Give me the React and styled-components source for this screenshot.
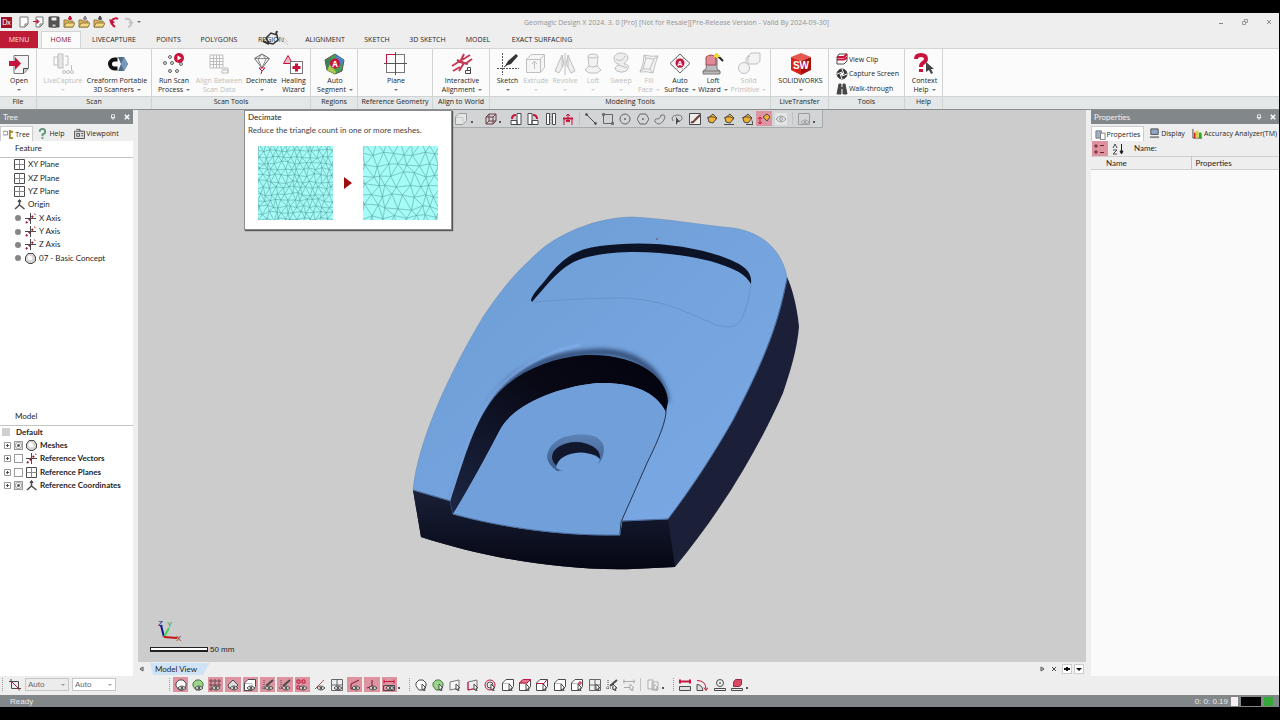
import React from "react";
import styled, { createGlobalStyle } from "styled-components";

const RED = "#c8143c";
const INK = "#4a4a4a";
const GREY = "#828789";
const COMPACT_FONT = `"Open Sans", "Noto Sans", sans-serif`;
const PLAIN_FONT = `"Liberation Sans", Arial, sans-serif`;

const GlobalStyle = createGlobalStyle`
  * {
    box-sizing: border-box;
  }

  body {
    margin: 0;
    background: #000;
    color: #1e1e1e;
    font-family: Lato, "Open Sans", sans-serif;
    font-size: 8px;
    line-height: 9px;
  }

  button,
  select,
  input {
    margin: 0;
    padding: 0;
    border: 0;
    background: none;
    color: inherit;
    font: inherit;
  }
`;

/* ---------- layout ---------- */

const Screen = styled.div`
  display: flex;
  flex-direction: column;
  height: 100vh;
  padding: 13px 1px 13px 0;
`;

const AppWindow = styled.div`
  position: relative;
  display: flex;
  flex: 1;
  flex-direction: column;
  min-height: 0;
  background: #eee;
`;

const TitleBar = styled.header`
  display: grid;
  grid-template-columns: 1fr auto 1fr;
  align-items: center;
  height: 18px;
`;

const QuickAccess = styled.div`
  display: flex;
  align-items: center;
  gap: 1px;
`;

const QuickButton = styled.button`
  display: flex;
  justify-content: center;
  width: 14px;
`;

const Title = styled.h1`
  margin: 0;
  padding-left: 74px;
  color: #949494;
  font-family: ${COMPACT_FONT};
  font-size: 7px;
  font-weight: 400;
`;

const WindowButtons = styled.div`
  display: flex;
  justify-content: flex-end;
  gap: 14px;
  padding-right: 4px;
`;

const WindowButton = styled.button`
  display: flex;
  width: 10px;
`;

const Tabs = styled.nav`
  display: flex;
  height: 17px;
`;

const RibbonTab = styled.button`
  width: ${(props) => props.$width}px;
  padding-bottom: 1px;
  white-space: nowrap;
  border: 1px solid transparent;
  border-bottom: 0;
  font-family: ${COMPACT_FONT};
  font-size: 7px;
  ${(props) =>
    props.$active &&
    "background: #fbfbfb; border-color: #d4d4d4; color: #7c1530;"}
`;

const MenuTab = styled(RibbonTab)`
  margin-right: 3px;
  background: #bd1b36;
  color: #fbe4e8;
`;

const Ribbon = styled.div`
  display: flex;
  height: 62px;
  border-top: 1px solid #d4d4d4;
  border-bottom: 1px solid #8a8e90;
  background: linear-gradient(#fbfbfb 47px, #cfd3d4 47px, #cfd3d4 48px, #e3e7e8 48px);
  font-family: ${COMPACT_FONT};
  font-size: 7px;
`;

const Group = styled.section`
  display: flex;
  flex-direction: column;
  flex: 0 0 ${(props) => props.$width}px;
  border-right: 1px solid #d0d3d4;
`;

const GroupBody = styled.div`
  display: flex;
  justify-content: center;
  height: 48px;
  padding: 3px 0 0 2px;
`;

const GroupName = styled.h2`
  margin: 0;
  font-size: 7px;
  font-weight: 400;
  text-align: center;
  white-space: nowrap;
`;

const BigButton = styled.button`
  display: flex;
  flex-direction: column;
  align-items: center;
  width: ${(props) => props.$width}px;
  white-space: nowrap;
  color: ${(props) => (props.disabled ? "#bdbdbd" : "inherit")};
`;

const LabelLine = styled.span`
  display: flex;
  align-items: center;
  justify-content: center;
  gap: 3px;
  height: 9px;
`;

const Caret = styled.i`
  border: 2px solid transparent;
  border-top-color: currentColor;
  border-bottom: 0;
  opacity: 0.6;
`;

const SmallButtons = styled.div`
  display: flex;
  flex-direction: column;
  justify-content: space-around;
  height: 44px;
`;

const SmallButton = styled.button`
  display: flex;
  align-items: center;
  gap: 1px;
  white-space: nowrap;
`;

const Workspace = styled.main`
  display: grid;
  grid-template-columns: 133px minmax(0, 1fr) 188px;
  flex: 1;
  min-height: 0;
`;

const Dock = styled.aside`
  display: flex;
  flex-direction: column;
  min-height: 0;
  overflow: hidden;
  background: #eee;
`;

const DockHeader = styled.div`
  display: flex;
  align-items: center;
  gap: 8px;
  height: 14px;
  padding: 0 3px;
  background: ${GREY};
  color: #f0f0f0;
`;

const DockTitle = styled.h2`
  flex: 1;
  margin: 0;
  font-size: 8px;
  font-weight: 400;
`;

const DockTabs = styled.div`
  display: flex;
  height: 17px;
  padding-top: 2px;
  font-family: ${COMPACT_FONT};
  font-size: 7px;
`;

const DockTab = styled.button`
  display: flex;
  flex: 0 0 ${(props) => props.$width}px;
  align-items: center;
  justify-content: center;
  gap: 1px;
  white-space: nowrap;
  ${(props) =>
    props.$active &&
    "background: #fff; border: 1px solid #ccc; border-bottom: 0;"}
`;

const Pane = styled.section`
  flex: 1;
  background: #fff;
`;

const PaneTitle = styled.h3`
  height: 17px;
  margin: 0;
  padding: 3px 0 0 15px;
  border-bottom: 1px solid #c4c4c4;
  font-size: 8px;
  font-weight: 400;
`;

const TreeList = styled.ul`
  display: grid;
  grid-auto-rows: 1fr;
  height: ${(props) => props.$height}px;
  margin: 0;
  padding: 0;
  list-style: none;
`;

const TreeItem = styled.li`
  display: flex;
  align-items: center;
  gap: 3px;
  padding-left: ${(props) => props.$indent}px;
  font-weight: ${(props) => (props.$bold ? 700 : 400)};
`;

const Bullet = styled.i`
  width: 6px;
  height: 6px;
  margin-right: 1px;
  border-radius: 50%;
  background: #858585;
`;

const Expander = styled.button`
  display: flex;
`;

const Check = styled.input`
  appearance: none;
  width: 9px;
  height: 9px;
  border: 1px solid #9a9a9a;
  background: #fff;

  &:checked {
    background: radial-gradient(#666 1px, #fff 2px, #aaa 3px, #e4e4e4 4px);
  }
`;

const CheckLabel = styled.label`
  display: flex;
  align-items: center;
  gap: 3px;
`;

const Swatch = styled.i`
  width: 8px;
  height: 8px;
  margin-right: 3px;
  background: #cfcfcf;
`;

const Center = styled.div`
  display: flex;
  flex-direction: column;
  min-width: 0;
  min-height: 0;
  padding: 0 5px;
`;

const Viewport = styled.div`
  position: relative;
  flex: 1;
  min-height: 0;
  background: #ccc;
`;

const Scene = styled.svg`
  display: block;
  width: 100%;
  height: 100%;
`;

const FloatingBar = styled.div`
  position: absolute;
  top: 0;
  left: 312px;
  display: flex;
  align-items: center;
  height: 18px;
  padding-right: 3px;
  border: 1px solid #a6abae;
  border-top: 0;
  background: #d2d4d5;
`;

const IconRun = styled.div`
  display: flex;
  flex: 0 0 ${(props) => props.$width}px;
  height: 15px;
`;

const ToolButton = styled.button`
  display: flex;
  flex: 1;
  align-items: center;
  justify-content: center;
  margin: 0 1px;
  background: ${(props) => (props.$on ? "#dd94a0" : "none")};
  opacity: ${(props) => (props.disabled ? 0.4 : 1)};
`;

const Dot = styled.i`
  width: 2px;
  height: 2px;
  margin: 6px ${(props) => props.$gap || 4}px 0 0;
  background: #555;
`;

const Divider = styled.i`
  width: 1px;
  height: 13px;
  margin: 0 2px;
  background: #c0c3c4;
`;

const Tooltip = styled.div`
  position: absolute;
  top: 0;
  left: 106px;
  width: 208px;
  height: 120px;
  padding: 2px 3px;
  border: 1px solid #8c8c8c;
  background: #fff;
  box-shadow: 1px 1px 1px #555;
  color: #444;
`;

const TooltipTitle = styled.strong`
  display: block;
  margin-bottom: 4px;
  font-weight: 400;
  color: #222;
`;

const TooltipArt = styled.div`
  display: flex;
  align-items: center;
  justify-content: space-between;
  padding: 11px 10px 0 10px;
`;

const Triad = styled.div`
  position: absolute;
  bottom: 8px;
  left: 12px;
`;

const ScaleBar = styled.div`
  display: flex;
  align-items: center;
  gap: 2px;
  font-family: ${PLAIN_FONT};
`;

const ScaleRule = styled.i`
  width: 58px;
  height: 5px;
  border: 1px solid #222;
  border-bottom-width: 2px;
  background: #fff;
`;

const ViewTabs = styled.div`
  display: flex;
  align-items: center;
  height: 14px;
  gap: 5px;
  padding-right: 5px;
`;

const ViewTab = styled.button`
  flex: 0 0 60px;
  height: 12px;
  padding-left: 5px;
  background: #cfe3f7;
  text-align: left;
  clip-path: polygon(0 0, 100% 0, 88% 100%, 5% 100%);
`;

const Spacer = styled.div`
  flex: 1;
`;

const ViewNav = styled.button`
  display: flex;
  align-items: center;
  justify-content: center;
  width: ${(props) => (props.$boxed ? 10 : 7)}px;
  height: 10px;
  ${(props) =>
    props.$boxed &&
    "background: #fff; border: 1px solid #ccc; margin-right: -3px;"}
`;

const PropTools = styled.div`
  display: flex;
  align-items: center;
  height: 15px;
`;

const PropName = styled.span`
  padding-left: 7px;
`;

const PropTable = styled.table`
  width: 100%;
  border-collapse: collapse;
  border-top: 1px solid #d0d0d0;

  th {
    height: 13px;
    padding: 0 0 0 4px;
    border-bottom: 1px solid #d0d0d0;
    font-size: 8px;
    font-weight: 400;
    line-height: 9px;
    text-align: left;
  }

  th + th {
    width: 88px;
    border-left: 1px solid #c4c4c4;
  }

  th:first-child {
    padding-left: 15px;
  }
`;

const Blank = styled.div`
  flex: 1;
  background: #fafafa;
`;

const BottomBar = styled.div`
  display: flex;
  align-items: center;
  height: 19px;
  padding-bottom: 2px;
`;

const Filters = styled.div`
  display: flex;
  align-items: center;
  flex: 0 0 167px;
`;

const Grip = styled.i`
  width: 1px;
  height: 13px;
  margin: 0 2px;
  border-left: 1px dotted #999;
`;

const SelectBox = styled.span`
  display: flex;
  align-items: center;
  width: 44px;
  height: 13px;
  margin-right: 3px;
  padding-right: 3px;
  border: 1px solid #c6c6c6;
  background: ${(props) => (props.$plain ? "#fff" : "#ececec")};
  color: #666;
  font-family: ${PLAIN_FONT};
`;

const Select = styled.select`
  flex: 1;
  padding-left: 2px;
  appearance: none;
`;

const StatusBar = styled.footer`
  display: flex;
  align-items: center;
  gap: 3px;
  height: 12px;
  padding: 0 6px 0 10px;
  background: ${GREY};
  color: #e8ecee;
  font-family: ${PLAIN_FONT};
`;

const Lamp = styled.i`
  width: ${(props) => props.$width}px;
  height: 9px;
  background: ${(props) => props.$color};
`;

const Pointer = styled.svg`
  position: absolute;
  top: 16px;
  left: 261px;
`;

/* ---------- drawings ---------- */

const Svg = ({ size = 12, box = 12, children }) => (
  <svg
    width={size}
    height={size}
    viewBox={`0 0 ${box} ${box}`}
    fill="none"
    stroke={INK}
    aria-hidden="true"
  >
    {children}
  </svg>
);

const ribbonArt = {
  open: (
    <>
      <path d="M7 3.500h14.500v13L17 21.500H7z" fill="#f4f4f4" stroke="#777" />
      <path d="M21 16.500h-4.500v5" fill="#ccc" />
      <path d="M2 9h6V5l6 6.500L8 18v-4H2z" fill={RED} stroke="none" />
    </>
  ),
  capture: (
    <g stroke="#c0c0c0">
      <rect x="3" y="5" width="4" height="8" />
      <rect x="7" y="2" width="5" height="14" fill="#e4e4e4" />
      <path d="M14 4h3v9h-3M20.500 13v5" />
      <circle cx="13" cy="20" r="1.500" />
      <circle cx="17" cy="20" r="1.500" />
      <circle cx="21" cy="20" r="1.500" />
    </g>
  ),
  creaform: (
    <>
      <path d="M13 5h6l4 7-4 7h-6l3-7z" fill="#4c6b8e" stroke="none" />
      <path d="M19 5l4 7-4 7-3-7z" fill="#7a98bb" stroke="none" />
      <path d="M12.500 7.500h-3a4.500 4.500 0 0 0 0 9h3" stroke="#111" strokeWidth="4" />
    </>
  ),
  run: (
    <>
      <g stroke="#666" fill="#ddd">
        <circle cx="8" cy="5" r="1.500" />
        <circle cx="3" cy="11" r="1.500" />
        <circle cx="10" cy="11" r="1.500" />
        <circle cx="19" cy="12" r="1.500" />
        <circle cx="8" cy="19" r="1.500" />
        <circle cx="15" cy="19" r="1.500" />
      </g>
      <circle cx="17" cy="6" r="5" fill={RED} stroke="none" />
      <path d="M15.500 3.500l4 2.500-4 2.500z" fill="#fff" stroke="none" />
    </>
  ),
  align: (
    <g stroke="#bdbdbd">
      <path d="M3 3h13v13H3zM6.500 3v13M9.500 3v13M12.500 3v13M3 6.500h13M3 9.500h13M3 12.500h13" />
      <path d="M15 18h6v3h-6zM17 18v-2h4v5" />
    </g>
  ),
  decimate: (
    <>
      <path d="M12 2l7.500 4.500L12 16 4.500 6.500z" fill="#fafafa" stroke="#666" />
      <path d="M4.500 6.500h15M8 7l4-5 4 5-4 9z" stroke="#888" />
      <path d="M9 16h6l-3 3zM12 19l-1 3" stroke={RED} />
    </>
  ),
  heal: (
    <>
      <path d="M6 3.500l4.500 8h-9z" stroke={RED} fill="#f3b8c4" />
      <rect x="8.500" y="9.500" width="12" height="12" fill="#fff" stroke="#777" />
      <path d="M14.500 11.500v8M10.500 15.500h8" stroke={RED} strokeWidth="3" />
    </>
  ),
  segment: (
    <>
      <path d="M12 2l9 6-2 11-7 3-8-4-2-10z" fill="#4d9b50" stroke="#555" />
      <path d="M12 2l9 6-3 6-6-8z" fill="#4b83c4" stroke="none" />
      <path d="M4 18l3-7 6 9-1 2z" fill="#a7c94a" stroke="none" />
      <path d="M2 8l6-2-1 6-3 6z" fill="#3f7f55" stroke="none" />
      <circle cx="12" cy="11.500" r="5" fill={RED} stroke="none" />
      <text x="12" y="14.500" textAnchor="middle" fontSize="8" fontWeight="700" fill="#fff" stroke="none">
        A
      </text>
    </>
  ),
  plane: (
    <>
      <rect x="2.500" y="2.500" width="18" height="18" stroke="#777" />
      <path d="M11.500 0v23M0 11.500h23" stroke="#555" />
      <path d="M2.500 11.500v-9h9" stroke={RED} />
    </>
  ),
  interactive: (
    <g stroke="#c43a54" strokeWidth="2">
      <path d="M20 3l-8 5M22 7l-7 5M14 2l-4 8 8 2" />
      <path d="M2 14l8-5M3 19l7-4M7 8l7 3-5 8" />
      <path d="M15.500 18.500h5v3h-5zM17.500 18v-2.500h3v6" stroke={INK} strokeWidth="1" />
    </g>
  ),
  sketch: (
    <>
      <path d="M6.500 1v22M1 16.500h22" stroke="#555" strokeDasharray="2 1" />
      <path d="M9 14l3-5 8-7 2 2-7 8z" fill="#333" stroke="none" />
      <path d="M8 15l3-2" />
    </>
  ),
  extrude: (
    <g stroke="#c0c0c0">
      <path d="M2.500 7l5-4.500h13v13l-4 5h-14z" fill="#f5f5f5" />
      <path d="M10.500 17v-7M8 12l2.500-3 2.500 3M20.500 3l-4 4v13M3 7.500h13" />
    </g>
  ),
  revolve: (
    <g stroke="#c0c0c0">
      <path d="M9 3l-7 16 4 2 5-9zM15 3l7 16-4 2-5-9zM12 1v22" fill="#eee" />
      <path d="M9 3v12M15 3v12" />
    </g>
  ),
  loft: (
    <g stroke="#c0c0c0" fill="#f2f2f2">
      <path d="M7 4l1 10-4 4 4 3h8l4-3-4-4 1-10z" />
      <ellipse cx="12" cy="4" rx="5" ry="2" />
      <path d="M8 14q4 2 8 0" />
    </g>
  ),
  sweep: (
    <g stroke="#bcbcbc" fill="#eee">
      <path d="M5 6a7 5 0 0 1 14 0c0 3-4 4-4 6 4 0 5 2 4 5a7 5 0 0 1-13 0c0-3 3-3 4-5-3 0-5-3-5-6z" />
      <path d="M7 7c3 3 8 1 9-3M9 13c3 0 6 3 9 2" />
    </g>
  ),
  fill: (
    <g stroke="#c0c0c0">
      <path d="M7 3q7 2 14 1-3 7-5 17-6-2-13-1 4-8 4-17z" fill="#f4f4f4" />
      <path d="M9 6l8 1-4 10-7 0zM7 3l2 3M21 4l-4 3M16 21l-3-4M3 20l3-3" />
    </g>
  ),
  surface: (
    <>
      <path d="M12 2l10 9.500L12 21 2 11.500z" fill="#f4f4f4" stroke="#666" />
      <path d="M8 6q3 6 8 0M8 18q3-6 8 0" stroke="#aaa" />
      <circle cx="12" cy="11" r="4.500" fill={RED} stroke="none" />
      <text x="12" y="13.500" textAnchor="middle" fontSize="7" fontWeight="700" fill="#fff" stroke="none">
        A
      </text>
    </>
  ),
  loftWizard: (
    <>
      <path d="M6 5L5 17l-3 2v3h17v-3l-3-2V5z" fill="#bbb" stroke="#777" />
      <path d="M5 5q5-4 10 0v8H5z" fill="#e28a98" stroke="#a0495a" />
      <path d="M2 19h17" stroke="#777" />
      <path d="M15 2l7 7" stroke="#222" strokeWidth="2" />
      <path d="M13 4h6M16 1v5" stroke="#f1de2d" strokeWidth="2" />
    </>
  ),
  solid: (
    <g stroke="#c0c0c0" fill="#f3f3f3">
      <path d="M11 4l3-3h9v8l-3 3h-9z" />
      <circle cx="7" cy="16" r="5.500" />
      <path d="M9 11V7q1-3 4-3" fill="none" />
    </g>
  ),
  solidworks: (
    <>
      <path d="M12 1l10 4-10 4L2 5z" fill="#e4574e" stroke="none" />
      <path d="M2 5l10 4v14L2 18z" fill="#d9221c" stroke="none" />
      <path d="M22 5L12 9v14l10-5z" fill="#a80f12" stroke="none" />
      <text
        x="12"
        y="17"
        textAnchor="middle"
        fontFamily="Liberation Sans, sans-serif"
        fontSize="10"
        fontWeight="700"
        fill="#fff"
        stroke="none"
      >
        SW
      </text>
    </>
  ),
  help: (
    <>
      <path
        d="M3 7q0-4 5-4t5 4q0 2-3 4-2 1-2 4"
        stroke={RED}
        strokeWidth="4"
      />
      <rect x="6" y="17" width="4" height="3" fill={RED} stroke="none" />
      <path d="M13 10l8 7h-3l2 4-2 1-2-4-3 2z" fill="#444" stroke="none" />
    </>
  ),
};

const smallArt = {
  clip: (
    <>
      <path d="M3 1h8v7l-3 3H1V4z" fill="#fff" />
      <path d="M1 4h7l3-3M1 6.500h7l3-2" stroke={RED} strokeWidth="2" />
    </>
  ),
  shutter: (
    <>
      <circle cx="6" cy="6" r="5" fill="#333" />
      <path d="M6 1l2 5M11 6L6 8M6 11L4 6M1 6l5-2" stroke="#fff" />
      <circle cx="6" cy="6" r="1.500" fill="#fff" stroke="none" />
    </>
  ),
  walk: (
    <>
      <path d="M3 1h2v10H1zM7 1h2l2 10H7z" fill="#444" />
      <path d="M4 5h4" strokeWidth="2" />
    </>
  ),
};

function Folder({ mark }) {
  return (
    <>
      <path d="M1 11V4h3l1 1h5v6z" fill="#e2b84e" stroke="#8f7a45" />
      <path d="M1 11l2-4h9l-2 4z" fill="#f6d983" stroke="#8f7a45" />
      <path d="M7 0v4M5 2.500h4" stroke={mark} strokeWidth="2" />
    </>
  );
}

const quickArt = {
  New: <path d="M2 1h8v7l-3 3H2zM10 8H7v3" fill="#fff" stroke="#777" />,
  Import: (
    <>
      <path d="M3 1h7v7l-3 3H3zM10 8H7v3" fill="#fff" stroke="#777" />
      <path d="M0 5.500h5M4 3.500l2 2-2 2z" stroke={RED} fill={RED} />
    </>
  ),
  Save: (
    <>
      <path d="M1 1h10v10H1z" fill="#555" />
      <path d="M3 1h6v4H3z" fill="#eee" />
      <path d="M4 8h4v3H4z" fill="#ccc" />
    </>
  ),
  "Open file": <Folder mark={RED} />,
  "Open recent": <Folder mark="#8a8a8a" />,
  "Open folder": <Folder mark="#555" />,
  Undo: (
    <>
      <path d="M3 5q4-4 7-2" stroke={RED} strokeWidth="2" />
      <path d="M4 5q-1 3 3 6" stroke={RED} strokeWidth="2" />
      <path d="M1 3l6 3-4 3z" fill={RED} stroke="none" />
    </>
  ),
  Redo: (
    <>
      <path d="M2 3q5-1 6 3t-3 5" stroke="#c4c4c4" strokeWidth="2" />
      <path d="M5 6h6L8 9z" fill="#c4c4c4" stroke="none" />
    </>
  ),
};

const PlaneIcon = () => (
  <Svg size={11} box={11}>
    <path d="M.5.500h10v10H.5z" />
    <path d="M5.500.5v10M.5 5.500h10" stroke="#888" />
  </Svg>
);

const AxisIcon = () => (
  <Svg size={11} box={11}>
    <path d="M5.500 0v11M0 5.500h11" />
    <path d="M1 10L10 1" stroke="#8c2438" strokeWidth="2" strokeDasharray="2 2" />
  </Svg>
);

const OriginIcon = () => (
  <Svg size={11} box={11}>
    <path d="M5.500 1v5L1 10M5.500 6l5 4" strokeWidth="1.500" />
    <path d="M4 2.500L5.500.5 7 2.500z" fill={INK} />
  </Svg>
);

const MeshIcon = () => (
  <Svg size={11} box={11}>
    <path d="M3 .5h5L10.500 4v4L7 10.500H4L.5 8V4z" fill="#d4d4d4" />
    <path d="M4 2l3 1 1 3-2 2-3-1-1-3z" fill="#fff" stroke="#ddd" />
  </Svg>
);

const Eye = () => (
  <>
    <path d="M3 9q3.500-4 8 0-4 4-8 0z" fill="#fff" />
    <circle cx="7" cy="9" r="1" fill={INK} />
  </>
);

const Arrow = () => (
  <path d="M7 5l4 4H9l1 3-1 0-1-2-1 1z" fill="#fff" />
);

const Ball = <path d="M4 1h4l3 3v3l-3 4H4L1 7V4z" fill="#fff" />;
const GreenBall = (
  <path d="M4 1h4l3 3v3l-3 4H4L1 7V4z" fill="#9bd48a" stroke="#447a44" />
);
const Cube = (
  <>
    <path d="M.5 4L4 .5h7.500v7l-3.500 4H.5z" fill="#fff" />
    <path d="M1 4.500h7V11" stroke="#bbb" />
  </>
);
const Pen = (
  <>
    <path d="M2 1v10M0 9h11" strokeDasharray="1 1" />
    <path d="M4 7l7-6" strokeWidth="2" />
  </>
);
const Bucket = (
  <>
    <path d="M2 5l5-4 4 4-4 5-4-1z" fill="#f0b030" />
    <path d="M1 5q5-3 10 1" />
  </>
);

const viewTools = [
  {
    name: "Section",
    art: (
      <>
        <path d="M1 7.500h6v4H1zM7 7.500V.5h4v11H7z" fill="#fff" />
        <path d="M2 6q0-4 4-4" stroke={RED} strokeWidth="2" />
      </>
    ),
  },
  {
    name: "Rotate section",
    art: (
      <>
        <path d="M5 7.500h6v4H5zM1 .5h4v11H1z" fill="#fff" />
        <path d="M6 2q4 0 4 4" stroke={RED} strokeWidth="2" />
      </>
    ),
  },
  {
    name: "Flip",
    art: (
      <>
        <path d="M1.500.5h3v11h-3zM7.500.5h3v11h-3z" fill="#fff" />
        <path d="M6 0v12" stroke="#999" strokeDasharray="2 1" />
      </>
    ),
  },
  {
    name: "Lift",
    art: (
      <>
        <path d="M1 5.500h10M4 8h4" stroke={RED} strokeWidth="2" />
        <path d="M2 6v6M10 6v6M6 8V1M4 3l2-2 2 2" stroke={RED} />
      </>
    ),
  },
];

const selectTools = [
  {
    name: "Line",
    art: (
      <>
        <path d="M1 1l10 10" />
        <circle cx="1.500" cy="1.500" r="1" />
        <circle cx="10.500" cy="10.500" r="1" />
      </>
    ),
  },
  {
    name: "Rectangle",
    art: <path d="M1.500 1.500h9v9h-9zM.5.500h2v2h-2zM9.500 9.500h2v2h-2z" stroke="#666" />,
  },
  {
    name: "Circle",
    art: (
      <>
        <circle cx="6" cy="6" r="5" stroke="#666" />
        <circle cx="6" cy="6" r=".5" />
      </>
    ),
  },
  {
    name: "Polygon",
    art: (
      <>
        <path d="M3 1h6l3 5-3 5H3L0 6z" stroke="#666" />
        <circle cx="6" cy="6" r=".5" />
      </>
    ),
  },
  {
    name: "Freeform",
    art: <path d="M1 9q-1-4 3-3 3-1 3-4 4-1 4 2-2 7-7 7z" stroke="#777" />,
  },
  {
    name: "Lasso",
    art: (
      <>
        <path d="M2 8q-3-5 4-6 6 0 5 4-1 2-3 2" stroke="#777" />
        <path d="M5 4l4 5H7l-2 3z" fill={INK} stroke="none" />
      </>
    ),
  },
  {
    name: "Brush",
    art: (
      <>
        <path d="M.5.500h11v11H.5z" fill="#eee" />
        <path d="M11 2L6 7q-2 3-4 2" strokeWidth="2" stroke="#6b3f3a" />
      </>
    ),
  },
  { name: "Fill", art: Bucket },
  {
    name: "Fill region",
    art: (
      <>
        {Bucket}
        <path d="M1 11.500h10" />
      </>
    ),
  },
  {
    name: "Fill smart",
    art: (
      <>
        {Bucket}
        <path d="M5 11.500h7l-1-4" />
      </>
    ),
  },
  {
    name: "Extend",
    on: true,
    art: (
      <>
        <path d="M5 4l4-3 3 3-3 4z" fill="#f0b030" />
        <path d="M2 4v7M0 6l2-2 2 2M0 9l2 2 2-2" stroke={RED} />
      </>
    ),
  },
  {
    name: "Visible only",
    disabled: true,
    art: (
      <>
        <rect width="12" height="12" fill="#fff" stroke="none" />
        <path d="M1 6q5-6 10 0-5 6-10 0z" />
        <circle cx="6" cy="6" r="1.500" />
      </>
    ),
  },
];

const showTools = [
  { name: "Meshes", on: true, art: Ball },
  { name: "Regions", art: GreenBall },
  {
    name: "Point clouds",
    on: true,
    art: (
      <path
        d="M1 1h2v2H1zM5 1h2v2H5zM9 1h2v2H9zM1 5h2v2H1zM5 5h2v2H5zM9 5h2v2H9zM1 9h2v2H1z"
        stroke="#6b4a50"
      />
    ),
  },
  { name: "Surfaces", on: true, art: <path d="M1 6l5-5 5 5-3 3H2z" fill="#ddd" /> },
  { name: "Solids", on: true, art: Cube },
  { name: "Sketches", on: true, art: Pen },
  { name: "3D sketches", on: true, art: Pen },
  {
    name: "Points",
    on: true,
    art: <path d="M1 1h3v3H1zM6 1h3v3H6zM1 7h3v3H1z" stroke={RED} />,
  },
  { name: "Vectors", art: <path d="M1 10L10 1" stroke="#a55" /> },
  {
    name: "Planes",
    art: <path d="M.5.500h11v11H.5zM6 1v10M1 6h10" stroke="#666" />,
  },
  { name: "Polylines", on: true, art: <path d="M10 1L2 5v5h3" stroke="#7c1530" /> },
  { name: "Coordinates", on: true, art: <path d="M6 1v6L1 9M6 7l5 2" stroke="#7c1530" /> },
  {
    name: "Dimensions",
    on: true,
    art: (
      <>
        <path d="M1 2.500h10M1 .5v4M11 .5v4" stroke={RED} />
        <path d="M.5 6.500h11v5H.5z" />
      </>
    ),
  },
].map((tool) => ({
  ...tool,
  art: (
    <>
      {tool.art}
      <Eye />
    </>
  ),
}));

const filterTools = [
  { name: "Select mesh", art: Ball },
  { name: "Select region", art: GreenBall },
  { name: "Select face", art: <path d="M1 3l9-2v8l-9 2z" fill="#f6f6f6" stroke="#777" /> },
  {
    name: "Select boundary",
    art: (
      <>
        <path d="M1 3l9-2v8l-9 2z" stroke="#777" />
        <path d="M1 3v8l5-1" stroke={RED} />
      </>
    ),
  },
  {
    name: "Select loop",
    art: (
      <>
        <circle cx="6" cy="6" r="5" stroke={RED} />
        <circle cx="6" cy="6" r="3" />
      </>
    ),
  },
  { name: "Select body", art: Cube },
  {
    name: "Select top",
    art: (
      <>
        {Cube}
        <path d="M.5 4L4 .5h7.500L8 4z" fill="#e5758a" stroke={RED} />
      </>
    ),
  },
  {
    name: "Select edge",
    art: (
      <>
        {Cube}
        <path d="M.5 4.500H8l3-4" stroke={RED} />
      </>
    ),
  },
  { name: "Select solid", art: Cube },
  {
    name: "Select vertex",
    art: (
      <>
        {Cube}
        <path d="M8 3h2v2H8z" stroke={RED} />
      </>
    ),
  },
  {
    name: "Select plane",
    art: <path d="M.5.500h11v11H.5zM6 1v10M1 6h10" stroke="#666" />,
  },
  { name: "Select sketch", art: Pen },
  {
    name: "Select dimension",
    disabled: true,
    art: <path d="M0 2.500h12M1 .5v4M11 .5v4M1 8.500h10" />,
  },
].map((tool) => ({
  ...tool,
  art: (
    <>
      {tool.art}
      <Arrow />
    </>
  ),
}));

const measureTools = [
  {
    name: "Distance",
    art: (
      <>
        <path d="M1 2.500h10M1 .5v4M11 .5v4" stroke={RED} strokeWidth="2" />
        <path d="M.5 7.500h11v4H.5z" fill="#ddd" />
      </>
    ),
  },
  {
    name: "Angle",
    art: (
      <>
        <path d="M1 11.500v-6q5 0 6 6z" fill="#ddd" />
        <path d="M1 1.500q9 0 9 9M8 8.500l2 3 2-3" stroke={RED} />
      </>
    ),
  },
  {
    name: "Radius",
    art: (
      <>
        <circle cx="6" cy="4" r="3.500" />
        <circle cx="6" cy="4" r=".5" />
        <path d="M.5 9.500h11v2H.5z" />
      </>
    ),
  },
  {
    name: "Area",
    art: (
      <>
        <path d="M2.500 3l2-2.500h6v5l-2 2h-6z" fill="#d84a64" stroke="#a02840" />
        <path d="M.5 9.500h11v2H.5z" />
      </>
    ),
  },
];

// jittered grid of points joined into triangles
const Mesh = ({ cells }) => {
  const step = 75 / cells;
  const points = [];
  for (let row = 0; row <= cells + 1; row++) {
    points.push([]);
    for (let col = 0; col <= cells + 2; col++) {
      const a = Math.sin(row * 12.9 + col * 78.2) * 43758.5;
      const b = Math.sin(row * 39.3 + col * 11.1) * 24634.6;
      points[row].push([
        (col - 0.7 + (row % 2) / 2 + (a - Math.floor(a) - 0.5) * 0.6) * step,
        (row - 0.3 + (b - Math.floor(b) - 0.5) * 0.6) * step,
      ]);
    }
  }
  let d = "";
  for (let row = 0; row <= cells; row++) {
    for (let col = 0; col <= cells + 1; col++) {
      const here = points[row][col];
      d += `M${here}L${points[row][col + 1]}`;
      d += `M${here}L${points[row + 1][col]}`;
      d +=
        row % 2
          ? `M${here}L${points[row + 1][col + 1]}`
          : `M${points[row][col + 1]}L${points[row + 1][col]}`;
    }
  }
  return (
    <svg width="75" height="74" viewBox="0 0 75 74" aria-hidden="true">
      <rect width="75" height="74" fill="#a4fbf7" />
      <path d={d} fill="none" stroke="#4f9592" strokeWidth=".5" />
    </svg>
  );
};

const Part = () => (
  <Scene
    viewBox="138 110 948 552"
    preserveAspectRatio="xMidYMid meet"
    role="img"
    aria-label="Scanned part"
  >
    <defs>
      <linearGradient id="top" x1="0" y1="0" x2="1" y2="1">
        <stop offset="0" stopColor="#6d9dd4" />
        <stop offset=".5" stopColor="#74a3dd" />
        <stop offset="1" stopColor="#7aa9e6" />
      </linearGradient>
      <linearGradient id="front" x1="0" y1="0" x2="0" y2="1">
        <stop offset="0" stopColor="#1a2038" />
        <stop offset="1" stopColor="#060714" />
      </linearGradient>
      <linearGradient id="wall" x1="0" y1="1" x2="1" y2="0">
        <stop offset="0" stopColor="#1c2644" />
        <stop offset=".6" stopColor="#090916" />
        <stop offset="1" stopColor="#03030e" />
      </linearGradient>
      <linearGradient id="hole" x1="0" y1="0" x2="0" y2="1">
        <stop offset="0" stopColor="#5c83b8" />
        <stop offset="1" stopColor="#3d5b88" />
      </linearGradient>
      <filter id="soft">
        <feGaussianBlur stdDeviation="2" />
      </filter>
      <filter id="slight">
        <feGaussianBlur stdDeviation=".8" />
      </filter>
      <clipPath id="face">
        <path d="M413 490C418 440 450 372 483 317C505 284 520 268 543 248C565 231 600 217 633 217C670 219 700 225 733 228C765 233 782 252 787 277C778 325 765 358 733 420C712 457 690 490 668 519L413 540z" />
      </clipPath>
    </defs>
    <path
      d="M413 490L421 537C480 556 555 571 633 569L675 567C720 513 758 450 783 393C790 372 797 350 799 327C797 305 791 285 787 277L600 300z"
      fill="#1b2038"
    />
    <path d="M413 490L421 537C480 556 555 571 633 569L675 567L668 519z" fill="url(#front)" />
    <path
      d="M413 490C418 440 450 372 483 317C505 284 520 268 543 248C565 231 600 217 633 217C670 219 700 225 733 228C765 233 782 252 787 277C778 325 765 358 733 420C712 457 690 490 668 519L622 521L620 535C560 536 500 527 453 514L450 501z"
      fill="url(#top)"
      stroke="#6088b8"
      strokeWidth=".5"
    />
    <g clipPath="url(#face)">
      <path
        d="M455 500C470 450 484 405 510 381C535 360 570 353 600 352C635 352 662 371 666 402"
        fill="none"
        stroke="#36517d"
        strokeWidth="7"
        filter="url(#soft)"
      />
      <path
        d="M451 499C463 456 474 417 497 390C517 368 547 351 580 345"
        fill="none"
        stroke="#86b2ee"
        strokeWidth="2"
        filter="url(#slight)"
      />
    </g>
    <path
      d="M450 502C463 462 473 427 490 403C509 376 545 358 585 355C640 353 668 379 668 402L666 412C655 391 632 382 597 383C550 388 511 408 500 430C490 449 470 487 453 514z"
      fill="url(#wall)"
    />
    <path
      d="M453 514C470 487 490 449 500 430C511 408 550 388 597 383C632 382 655 391 666 412Q666 425 647 463Q633 495 622 521L620 535C560 536 500 527 453 514z"
      fill="#719fda"
    />
    <path d="M666 411Q666 425 647 463Q633 495 621 522L620 534" fill="none" stroke="#243451" />
    <path d="M453 514C500 527 560 536 620 535" fill="none" stroke="#4b6c9b" />
    <path
      d="M413 490L451 501M622 521L668 519M787 279C778 325 765 358 733 420C712 457 690 490 668 519"
      fill="none"
      stroke="#4b6c9b"
    />
    <path
      d="M531 300C533 293 540 287 547 278C562 259 575 249 600 246C650 239 704 247 735 262C748 268 752 275 751 284C745 273 733 268 710 261C660 249 613 250 584 258C563 264 552 279 532 302z"
      fill="#0d1327"
    />
    <path
      d="M533 302Q575 298 620 298C665 299 690 314 716 325C738 331 741 320 743 316Q750 300 751 284"
      fill="none"
      stroke="#6894cc"
    />
    <path
      d="M557 471Q547 464 547 456Q549 443 564 437Q580 432 594 436Q607 442 603 455Q602 462 594 467z"
      fill="url(#hole)"
    />
    <ellipse cx="576" cy="457" rx="24" ry="15" fill="#11172d" />
    <path d="M556 468C557 458 568 453 580 452.500C592 453 600 457 600 460Q598 468 584 472Q566 474 556 468z" fill="#719fda" />
    <circle cx="657" cy="239" r=".8" fill="#8a2c4a" />
  </Scene>
);

/* ---------- pieces ---------- */

const Big = ({ icon, width, lines, menu, disabled }) => (
  <BigButton $width={width} disabled={disabled}>
    <Svg size={24} box={24}>
      {ribbonArt[icon]}
    </Svg>
    <LabelLine>{lines[0]}</LabelLine>
    <LabelLine>
      {lines[1]}
      {menu && <Caret />}
    </LabelLine>
  </BigButton>
);

const RibbonGroup = ({ name, width, children }) => (
  <Group $width={width}>
    <GroupBody>{children}</GroupBody>
    <GroupName>{name}</GroupName>
  </Group>
);

const Tools = ({ items, width }) => (
  <IconRun $width={width}>
    {items.map((item) => (
      <ToolButton
        key={item.name}
        aria-label={item.name}
        $on={item.on}
        disabled={item.disabled}
      >
        <Svg>{item.art}</Svg>
      </ToolButton>
    ))}
  </IconRun>
);

const DockTop = ({ title }) => (
  <DockHeader>
    <DockTitle>{title}</DockTitle>
    <Svg size={6} box={8}>
      <path d="M2 1h4v4H2zM1 5h6M4 5v3" stroke="#fff" />
    </Svg>
    <Svg size={6} box={8}>
      <path d="M1 1l6 6M7 1L1 7" stroke="#fff" strokeWidth="2" />
    </Svg>
  </DockHeader>
);

const tabs = [
  ["LIVECAPTURE", 66],
  ["POINTS", 43],
  ["POLYGONS", 58],
  ["REGION", 46],
  ["ALIGNMENT", 62],
  ["SKETCH", 42],
  ["3D SKETCH", 59],
  ["MODEL", 42],
  ["EXACT SURFACING", 86],
];

const modelRows = [
  { name: "Meshes", icon: <MeshIcon />, shown: true },
  { name: "Reference Vectors", icon: <AxisIcon /> },
  { name: "Reference Planes", icon: <PlaneIcon /> },
  { name: "Reference Coordinates", icon: <OriginIcon />, shown: true },
];

const App = () => {
  return (
    <>
      <GlobalStyle />
      <Screen>
        <AppWindow>
          <TitleBar>
            <QuickAccess>
              <svg width="16" height="12" viewBox="0 0 16 12" aria-hidden="true">
                <rect x="1" y="1" width="11" height="11" fill="#a01228" />
                <text x="6.500" y="9" textAnchor="middle" fontSize="7" fill="#fff">
                  Dx
                </text>
              </svg>
              {Object.keys(quickArt).map((name) => (
                <QuickButton key={name} aria-label={name}>
                  <Svg>{quickArt[name]}</Svg>
                </QuickButton>
              ))}
              <Caret />
            </QuickAccess>
            <Title>
              Geomagic Design X 2024. 3. 0 [Pro] [Not for
              Resale][Pre-Release Version - Valid By 2024-09-30]
            </Title>
            <WindowButtons>
              <WindowButton aria-label="Minimize">
                <Svg size={8} box={8}>
                  <path d="M2 5.500h4" stroke="#888" />
                </Svg>
              </WindowButton>
              <WindowButton aria-label="Restore">
                <Svg size={8} box={8}>
                  <path d="M1.500 3.500h3v3h-3zM3.500 3V1.500h3v3H5" stroke="#999" />
                </Svg>
              </WindowButton>
              <WindowButton aria-label="Close">
                <Svg size={8} box={8}>
                  <path d="M2 2l4 4M6 2L2 6" stroke="#888" />
                </Svg>
              </WindowButton>
            </WindowButtons>
          </TitleBar>

          <Tabs>
            <MenuTab $width={38}>MENU</MenuTab>
            <RibbonTab $width={40} $active>
              HOME
            </RibbonTab>
            {tabs.map(([name, width]) => (
              <RibbonTab key={name} $width={width}>
                {name}
              </RibbonTab>
            ))}
          </Tabs>

          <Ribbon>
            <RibbonGroup name="File" width={37}>
              <Big icon="open" width={34} lines={["Open"]} menu />
            </RibbonGroup>
            <RibbonGroup name="Scan" width={115}>
              <Big icon="capture" width={44} lines={["LiveCapture"]} menu disabled />
              <Big icon="creaform" width={64} lines={["Creaform Portable", "3D Scanners"]} menu />
            </RibbonGroup>
            <RibbonGroup name="Scan Tools" width={159}>
              <Big icon="run" width={38} lines={["Run Scan", "Process"]} menu />
              <Big icon="align" width={52} lines={["Align Between", "Scan Data"]} disabled />
              <Big icon="decimate" width={33} lines={["Decimate"]} menu />
              <Big icon="heal" width={31} lines={["Healing", "Wizard"]} />
            </RibbonGroup>
            <RibbonGroup name="Regions" width={47}>
              <Big icon="segment" width={42} lines={["Auto", "Segment"]} menu />
            </RibbonGroup>
            <RibbonGroup name="Reference Geometry" width={75}>
              <Big icon="plane" width={30} lines={["Plane"]} menu />
            </RibbonGroup>
            <RibbonGroup name="Align to World" width={57}>
              <Big icon="interactive" width={50} lines={["Interactive", "Alignment"]} menu />
            </RibbonGroup>
            <RibbonGroup name="Modeling Tools" width={281}>
              <Big icon="sketch" width={28} lines={["Sketch"]} menu />
              <Big icon="extrude" width={29} lines={["Extrude"]} menu disabled />
              <Big icon="revolve" width={29} lines={["Revolve"]} menu disabled />
              <Big icon="loft" width={27} lines={["Loft"]} menu disabled />
              <Big icon="sweep" width={29} lines={["Sweep"]} menu disabled />
              <Big icon="fill" width={27} lines={["Fill", "Face"]} menu disabled />
              <Big icon="surface" width={35} lines={["Auto", "Surface"]} menu />
              <Big icon="loftWizard" width={31} lines={["Loft", "Wizard"]} menu />
              <Big icon="solid" width={40} lines={["Solid", "Primitive"]} menu disabled />
            </RibbonGroup>
            <RibbonGroup name="LiveTransfer" width={58}>
              <Big icon="solidworks" width={50} lines={["SOLIDWORKS"]} menu />
            </RibbonGroup>
            <RibbonGroup name="Tools" width={76}>
              <SmallButtons>
                <SmallButton>
                  <Svg>{smallArt.clip}</Svg>
                  View Clip
                </SmallButton>
                <SmallButton>
                  <Svg>{smallArt.shutter}</Svg>
                  Capture Screen
                </SmallButton>
                <SmallButton>
                  <Svg>{smallArt.walk}</Svg>
                  Walk-through
                </SmallButton>
              </SmallButtons>
            </RibbonGroup>
            <RibbonGroup name="Help" width={38}>
              <Big icon="help" width={34} lines={["Context", "Help"]} menu />
            </RibbonGroup>
          </Ribbon>

          <Workspace>
            <Dock>
              <DockTop title="Tree" />
              <DockTabs>
                <DockTab $width={33} $active>
                  <Svg size={11}>
                    <path d="M0 2.500h5v4H0z" stroke="#888" />
                    <path d="M7.500 1v10M7 3h4M7 10h4" stroke="#a68a2c" strokeWidth="2" />
                  </Svg>
                  Tree
                </DockTab>
                <DockTab $width={36}>
                  <Svg size={11}>
                    <path d="M3 4q0-3 3-3t3 3q0 2-3 3v2M6 10v2" stroke="#5f9578" strokeWidth="2" />
                  </Svg>
                  Help
                </DockTab>
                <DockTab $width={55}>
                  <Svg size={11}>
                    <path d="M.5 3.500h11v8H.5zM2.500 1.500h4v2" fill="#ddd" />
                    <path d="M3 6h3v3H3zM8 6h2M8 8.500h2" />
                  </Svg>
                  Viewpoint
                </DockTab>
              </DockTabs>
              <Pane>
                <PaneTitle>Feature</PaneTitle>
                <TreeList $height={107}>
                  {["XY Plane", "XZ Plane", "YZ Plane"].map((name) => (
                    <TreeItem key={name} $indent={14}>
                      <PlaneIcon />
                      {name}
                    </TreeItem>
                  ))}
                  <TreeItem $indent={14}>
                    <OriginIcon />
                    Origin
                  </TreeItem>
                  {["X Axis", "Y Axis", "Z Axis"].map((name) => (
                    <TreeItem key={name} $indent={15}>
                      <Bullet />
                      <AxisIcon />
                      {name}
                    </TreeItem>
                  ))}
                  <TreeItem $indent={15}>
                    <Bullet />
                    <MeshIcon />
                    07 - Basic Concept
                  </TreeItem>
                </TreeList>
              </Pane>
              <Pane>
                <PaneTitle>Model</PaneTitle>
                <TreeList $height={67}>
                  <TreeItem $indent={2} $bold>
                    <Swatch />
                    Default
                  </TreeItem>
                  {modelRows.map((row) => (
                    <TreeItem key={row.name} $indent={4} $bold>
                      <Expander aria-label={`Expand ${row.name}`}>
                        <Svg size={7} box={7}>
                          <path d="M.5.500h6v6h-6z" stroke="#999" />
                          <path d="M2 3.500h3M3.500 2v3" />
                        </Svg>
                      </Expander>
                      <CheckLabel>
                        <Check type="checkbox" defaultChecked={row.shown} />
                        {row.icon}
                        {row.name}
                      </CheckLabel>
                    </TreeItem>
                  ))}
                </TreeList>
              </Pane>
            </Dock>

            <Center>
              <Viewport>
                <Part />
                <FloatingBar>
                  <IconRun $width={20}>
                    <ToolButton aria-label="Shading" disabled>
                      <Svg>{Cube}</Svg>
                    </ToolButton>
                  </IconRun>
                  <Dot $gap={9} />
                  <IconRun $width={17}>
                    <ToolButton aria-label="View cube">
                      <Svg>
                        <path
                          d="M1 4l3-3h7v7l-3 3H1zM4 1v7h7M1 11l3-3M8 11V4H1M8 4l3-3"
                          stroke="#6b3a45"
                        />
                      </Svg>
                    </ToolButton>
                  </IconRun>
                  <Dot $gap={6} />
                  <Tools items={viewTools} width={70} />
                  <Divider />
                  <Tools items={selectTools} width={208} />
                  <Divider />
                  <IconRun $width={18}>
                    <ToolButton aria-label="View filter" disabled>
                      <Svg>
                        <path d="M.5.500h11v11H.5z" />
                        <Eye />
                      </Svg>
                    </ToolButton>
                  </IconRun>
                  <Dot />
                </FloatingBar>
                <Tooltip role="tooltip">
                  <TooltipTitle>Decimate</TooltipTitle>
                  Reduce the triangle count in one or more meshes.
                  <TooltipArt>
                    <Mesh cells={12} />
                    <svg width="8" height="12" viewBox="0 0 8 12" aria-hidden="true">
                      <path d="M0 0l8 6-8 6z" fill="#a00c10" />
                    </svg>
                    <Mesh cells={7} />
                  </TooltipArt>
                </Tooltip>
                <Triad>
                  <svg width="34" height="26" viewBox="0 0 34 26" fill="none" aria-hidden="true">
                    <path d="M14 20L11 8" stroke="#14148c" strokeWidth="2" />
                    <path d="M14 20l5-9" stroke="#3cd65a" strokeWidth="2" />
                    <path d="M14 20l13 1" stroke="#c01616" strokeWidth="2" />
                    <g fontFamily="Liberation Sans, sans-serif" fontSize="8">
                      <text x="8" y="9" fill="#14148c">Z</text>
                      <text x="17" y="10" fill="#2f9c48">Y</text>
                      <text x="26" y="24" fill="#a01616">X</text>
                    </g>
                  </svg>
                  <ScaleBar>
                    <ScaleRule />
                    50 mm
                  </ScaleBar>
                </Triad>
              </Viewport>
              <ViewTabs>
                <ViewNav aria-label="Previous view">
                  <Svg size={6} box={6}>
                    <path d="M4 1v4L1 3z" />
                  </Svg>
                </ViewNav>
                <ViewTab>Model View</ViewTab>
                <Spacer />
                <ViewNav aria-label="Next view">
                  <Svg size={6} box={6}>
                    <path d="M2 1v4l3-2z" />
                  </Svg>
                </ViewNav>
                <ViewNav aria-label="Close view">
                  <Svg size={6} box={6}>
                    <path d="M1 1l4 4M5 1L1 5" />
                  </Svg>
                </ViewNav>
                <ViewNav aria-label="Split view" $boxed>
                  <Svg size={6} box={6}>
                    <path d="M0 3h6M3 1v4" strokeWidth="2" stroke="#111" />
                  </Svg>
                </ViewNav>
                <ViewNav aria-label="View list" $boxed>
                  <Svg size={6} box={6}>
                    <path d="M0 2h6L3 5z" fill="#111" stroke="none" />
                  </Svg>
                </ViewNav>
              </ViewTabs>
            </Center>

            <Dock>
              <DockTop title="Properties" />
              <DockTabs>
                <DockTab $width={53} $active>
                  <Svg size={11}>
                    <path d="M1 2h6v8H1z" fill="#9fb0c8" stroke="#777" />
                    <path d="M6 4.500h5v7H6z" fill="#fff" stroke="#777" />
                  </Svg>
                  Properties
                </DockTab>
                <DockTab $width={46}>
                  <Svg size={11}>
                    <path d="M2 1h8v6H2z" fill="#8fa6c4" />
                    <path d="M1 10h10" stroke="#888" strokeWidth="2" />
                  </Svg>
                  Display
                </DockTab>
                <DockTab $width={89}>
                  <Svg size={11}>
                    <path d="M1 1v10h10" />
                    <path d="M3 11V5" stroke="#c22" strokeWidth="2" />
                    <path d="M5.500 11V3" stroke="#dc3" strokeWidth="3" />
                    <path d="M9 11V5" stroke="#2a2" strokeWidth="3" />
                  </Svg>
                  Accuracy Analyzer(TM)
                </DockTab>
              </DockTabs>
              <PropTools>
                <IconRun $width={18}>
                  <ToolButton aria-label="Categorized" $on>
                    <Svg>
                      <path d="M1 2h2v2H1zM1 8h2v2H1zM6 2.500h4M6 9.500h4" stroke="#6b2036" />
                    </Svg>
                  </ToolButton>
                </IconRun>
                <IconRun $width={18}>
                  <ToolButton aria-label="Sort A to Z">
                    <Svg>
                      <path d="M1 5l2-4 2 4M1 7h4l-4 4h4" />
                      <path d="M9.500 1v9M8 8l1.500 3L11 8z" stroke="#222" fill="#222" />
                    </Svg>
                  </ToolButton>
                </IconRun>
                <PropName>Name:</PropName>
              </PropTools>
              <PropTable>
                <thead>
                  <tr>
                    <th>Name</th>
                    <th>Properties</th>
                  </tr>
                </thead>
              </PropTable>
              <Blank />
            </Dock>
          </Workspace>

          <BottomBar>
            <Filters>
              <Grip />
              <IconRun $width={20}>
                <ToolButton aria-label="Selection mode">
                  <Svg>
                    <path d="M2.500 2.500h7v7h-7zM0 2.500h2V0M12 9.500h-2v2" />
                    <path d="M2 2l8 8" stroke={RED} />
                  </Svg>
                </ToolButton>
              </IconRun>
              <SelectBox>
                <Select aria-label="Selection filter">
                  <option>Auto</option>
                </Select>
                <Caret />
              </SelectBox>
              <SelectBox $plain>
                <Select aria-label="Selection unit">
                  <option>Auto</option>
                </Select>
                <Caret />
              </SelectBox>
            </Filters>
            <Grip />
            <Tools items={showTools} width={226} />
            <Dot $gap={7} />
            <Grip />
            <Tools items={filterTools} width={226} />
            <Divider />
            <IconRun $width={19}>
              <ToolButton aria-label="Select all" disabled>
                <Svg>
                  <path d="M1 1h5v9H1zM5 3h6v8H5z" fill="#fff" />
                  <Arrow />
                </Svg>
              </ToolButton>
            </IconRun>
            <Dot $gap={7} />
            <Grip />
            <Tools items={measureTools} width={70} />
            <Dot />
          </BottomBar>

          <StatusBar>
            Ready
            <Spacer />
            0: 0: 0.19
            <Lamp $width={7} $color="#f4f0f4" />
            <Lamp $width={20} $color="#000" />
            <Lamp $width={9} $color="#35a83a" />
          </StatusBar>

          <Pointer width="30" height="20" viewBox="0 0 30 20" fill="none" stroke="#333" aria-hidden="true">
            <path d="M5 9l5-5 6 2 1 5-5 4-4-1z" strokeWidth="1.500" />
            <path d="M2 12l6 3M15 5l1-3" strokeWidth="2" />
            <path d="M19 9l8 7M22 8l5 5" stroke="#ccc" />
          </Pointer>
        </AppWindow>
      </Screen>
    </>
  );
};

export default App;
